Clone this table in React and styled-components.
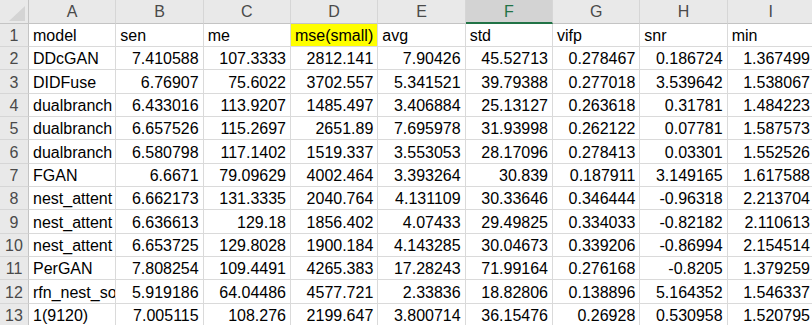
import React from "react";
import styled, { createGlobalStyle } from "styled-components";

const Global = createGlobalStyle`
  html, body { margin: 0; padding: 0; background: #ffffff; overflow: hidden; }
  #root { width: 812px; height: 325px; overflow: hidden; }
`;

const Sheet = styled.div`
  display: grid;
  grid-template-columns: 29px repeat(9, 87.33px);
  grid-template-rows: 23.67px repeat(13, 23.33px);
  font-family: "Liberation Sans", Arial, sans-serif;
  font-size: 16px;
  color: #000;
  width: 815px;
`;

const Corner = styled.div`
  box-sizing: border-box;
  background: #e9e9e9;
  border-right: 1px solid #c4c4c4;
  border-bottom: 1px solid #c4c4c4;
  display: flex;
  align-items: flex-end;
  justify-content: flex-end;
  padding: 0 3px 2px 0;
`;

const ColHeader = styled.div`
  box-sizing: border-box;
  background: ${(p) => (p.$selected ? "#d3d3d3" : "#e9e9e9")};
  color: ${(p) => (p.$selected ? "#217346" : "#4a4a4a")};
  border-right: 1px solid #d6d6d6;
  border-bottom: ${(p) => (p.$selected ? "2px solid #217346" : "1px solid #c4c4c4")};
  display: flex;
  align-items: flex-end;
  justify-content: center;
  line-height: 18px;
  padding-bottom: ${(p) => (p.$selected ? "1px" : "2px")};
`;

const RowHeader = styled.div`
  box-sizing: border-box;
  background: #e9e9e9;
  color: #4a4a4a;
  border-right: 1px solid #c4c4c4;
  border-bottom: 1px solid #d6d6d6;
  display: flex;
  align-items: flex-end;
  justify-content: center;
  line-height: 18px;
  padding-bottom: 1px;
`;

const Cell = styled.div`
  box-sizing: border-box;
  background: ${(p) => (p.$highlight ? "#ffff00" : "#ffffff")};
  border-right: 1px solid #dadada;
  border-bottom: 1px solid #dadada;
  display: flex;
  align-items: flex-end;
  justify-content: ${(p) => (p.$num ? "flex-end" : "flex-start")};
  padding: 0 4px 1px 4px;
  line-height: 18px;
  white-space: nowrap;
  overflow: hidden;
`;

const cols = ["A", "B", "C", "D", "E", "F", "G", "H", "I"];

const header = ["model", "sen", "me", "mse(small)", "avg", "std", "vifp", "snr", "min"];

const rows = [
  ["DDcGAN", "7.410588", "107.3333", "2812.141", "7.90426", "45.52713", "0.278467", "0.186724", "1.367499"],
  ["DIDFuse", "6.76907", "75.6022", "3702.557", "5.341521", "39.79388", "0.277018", "3.539642", "1.538067"],
  ["dualbranch", "6.433016", "113.9207", "1485.497", "3.406884", "25.13127", "0.263618", "0.31781", "1.484223"],
  ["dualbranch", "6.657526", "115.2697", "2651.89", "7.695978", "31.93998", "0.262122", "0.07781", "1.587573"],
  ["dualbranch", "6.580798", "117.1402", "1519.337", "3.553053", "28.17096", "0.278413", "0.03301", "1.552526"],
  ["FGAN", "6.6671", "79.09629", "4002.464", "3.393264", "30.839", "0.187911", "3.149165", "1.617588"],
  ["nest_attent", "6.662173", "131.3335", "2040.764", "4.131109", "30.33646", "0.346444", "-0.96318", "2.213704"],
  ["nest_attent", "6.636613", "129.18", "1856.402", "4.07433", "29.49825", "0.334033", "-0.82182", "2.110613"],
  ["nest_attent", "6.653725", "129.8028", "1900.184", "4.143285", "30.04673", "0.339206", "-0.86994", "2.154514"],
  ["PerGAN", "7.808254", "109.4491", "4265.383", "17.28243", "71.99164", "0.276168", "-0.8205", "1.379259"],
  ["rfn_nest_so", "5.919186", "64.04486", "4577.721", "2.33836", "18.82806", "0.138896", "5.164352", "1.546337"],
  ["1(9120)", "7.005115", "108.276", "2199.647", "3.800714", "36.15476", "0.26928", "0.530958", "1.520795"],
];

export default function App() {
  return (
    <>
      <Global />
      <Sheet>
        <Corner>
          <svg width="16" height="15" viewBox="0 0 16 15">
            <polygon points="16,0 16,15 0,15" fill="#d4d4d4" />
          </svg>
        </Corner>
        {cols.map((c) => (
          <ColHeader key={c} $selected={c === "F"}>
            {c}
          </ColHeader>
        ))}
        <RowHeader>1</RowHeader>
        {header.map((h, i) => (
          <Cell key={h} $highlight={i === 3}>
            {h}
          </Cell>
        ))}
        {rows.map((r, ri) => (
          <React.Fragment key={ri}>
            <RowHeader>{ri + 2}</RowHeader>
            {r.map((v, ci) => (
              <Cell key={ci} $num={ci > 0}>
                {v}
              </Cell>
            ))}
          </React.Fragment>
        ))}
      </Sheet>
    </>
  );
}
